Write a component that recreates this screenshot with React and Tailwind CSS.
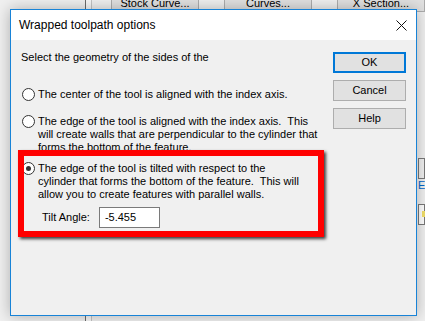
import React from "react";

const FONT = { fontFamily: '"Liberation Sans", Arial, sans-serif' };

function Radio({ checked }) {
  return (
    <span className="ml-[1px] w-[13px] h-[13px] rounded-full border border-[#333333] bg-white flex items-center justify-center shrink-0">
      {checked && <span className="w-[5px] h-[5px] rounded-full bg-[#333333]" />}
    </span>
  );
}

function DlgButton({ label, primary }) {
  return (
    <button
      className={`h-[21px] w-[73px] bg-[#e1e1e1] text-[11px] leading-[13px] text-black flex items-center justify-center ${
        primary ? "border-2 border-[#0078d7]" : "border border-[#adadad]"
      }`}
    >
      {label}
    </button>
  );
}

function BgButton({ label }) {
  return (
    <div className="w-[88px] h-[22px] -mt-[10px] pt-[6px] bg-[#e1e1e1] border border-[#adadad] flex justify-center text-[11px] leading-[13px] text-black shrink-0">
      {label}
    </div>
  );
}

export default function App() {
  return (
    <div className="relative w-[425px] h-[321px] overflow-hidden bg-[#f0f0f0]" style={FONT}>
      {/* application behind the dialog */}
      <div className="flex h-full">
        <div className="w-[97px] bg-[#f0f0f0]" />
        <div className="w-[1px] bg-[#6b6b6b]" />
        <div className="w-[6px] bg-[#f7f7f7]" />
        <div className="w-[1px] bg-[#c4c4c4]" />
        <div className="flex-1 flex flex-col">
          <div className="flex gap-[25px] pl-[19px]">
            <BgButton label="Stock Curve..." />
            <BgButton label="Curves..." />
            <BgButton label="X Section..." />
          </div>
          <div className="flex justify-end">
            <div className="w-[9px] mt-[146px] pl-[2px] flex flex-col">
              <div className="h-[21px] border border-[#7a7a7a] bg-[#f0f0f0]" />
              <div className="mt-[1px] text-[11px] leading-[11px] text-[#0066cc]">E</div>
              <div className="mt-[13px] h-[21px] border border-[#7a7a7a] bg-white pl-[3px] pt-[6px]">
                <div className="w-[3px] h-[6px] bg-[#f3e06a]" />
              </div>
            </div>
          </div>
        </div>
      </div>

      {/* dialog window */}
      <div className="absolute left-[10px] top-[9px] w-[407px] h-[307px] border border-[#1883d7] bg-[#f0f0f0] flex flex-col shadow-[0_0_14px_rgba(0,0,0,0.28)]">
        <div className="h-[30px] bg-white flex items-center justify-between pl-[8px] pr-[9px] shrink-0">
          <span className="text-[12px] text-black">Wrapped toolpath options</span>
          <svg width="11" height="11" viewBox="0 0 11 11">
            <path d="M0.5 0.5 L10.5 10.5 M10.5 0.5 L0.5 10.5" stroke="#111" strokeWidth="1" />
          </svg>
        </div>

        <div className="flex pl-[10px] pr-[10px] pt-[11px] text-[11px] leading-[13px] text-black">
          <div className="flex-1 flex flex-col">
            <div>Select the geometry of the sides of the</div>

            <div className="mt-[24px] flex gap-[3px]">
              <Radio />
              <div>The center of the tool is aligned with the index axis.</div>
            </div>

            <div className="mt-[14px] flex gap-[3px]">
              <Radio />
              <div className="whitespace-pre">
                {"The edge of the tool is aligned with the index axis.  This\nwill create walls that are perpendicular to the cylinder that\nforms the bottom of the feature."}
              </div>
            </div>

            <div className="mt-[8px] flex gap-[3px]">
              <Radio checked />
              <div className="whitespace-pre">
                {"The edge of the tool is tilted with respect to the\ncylinder that forms the bottom of the feature.  This will\nallow you to create features with parallel walls."}
              </div>
            </div>

            <div className="mt-[6px] pl-[21px] flex items-center gap-[9px]">
              <span>Tilt Angle:</span>
              <div className="w-[61px] h-[21px] bg-white border border-[#7a7a7a] pl-[5px] flex items-center">
                -5.455
              </div>
            </div>
          </div>

          <div className="w-[73px] mt-[1px] flex flex-col gap-[7px]">
            <DlgButton label="OK" primary />
            <DlgButton label="Cancel" />
            <DlgButton label="Help" />
          </div>
        </div>
      </div>

      {/* red annotation frame */}
      <div className="absolute left-[18px] top-[150px] w-[306px] h-[87px] border-[6px] border-[#ff0000] shadow-[2px_2px_3px_rgba(0,0,0,0.75)]" />
    </div>
  );
}
